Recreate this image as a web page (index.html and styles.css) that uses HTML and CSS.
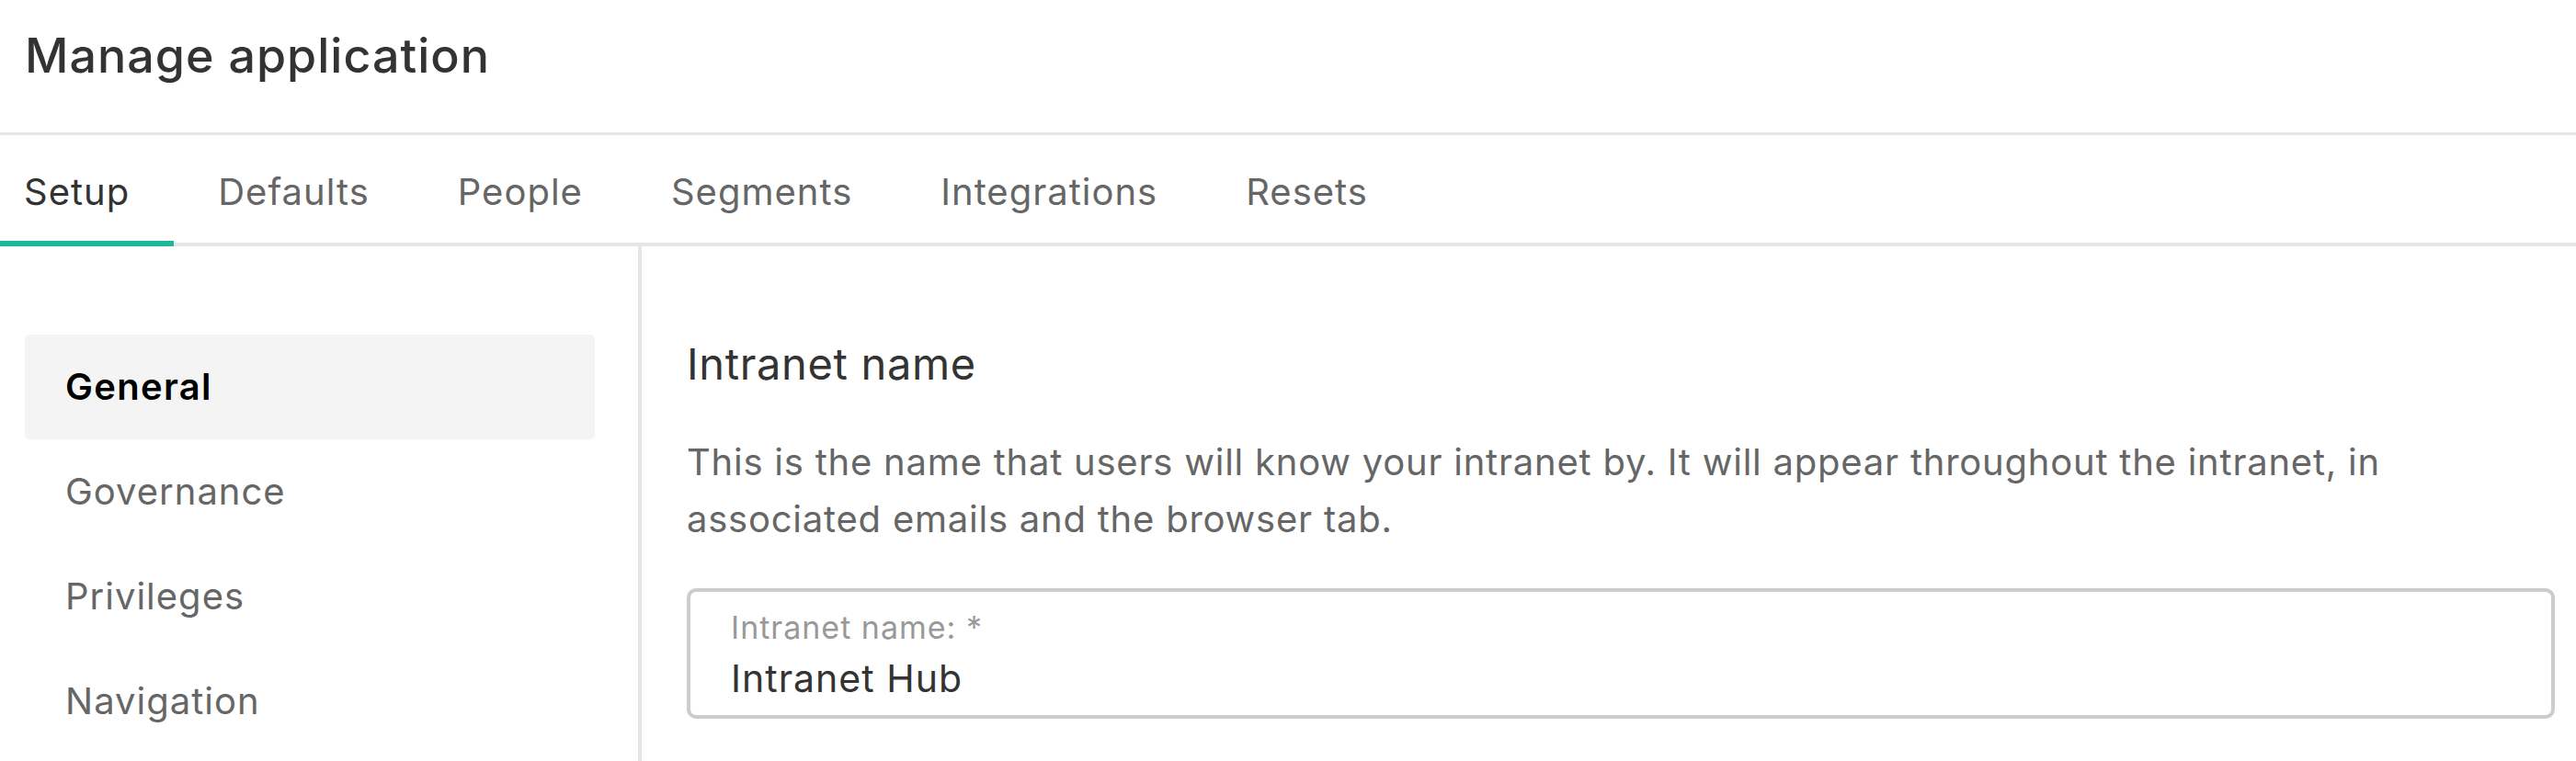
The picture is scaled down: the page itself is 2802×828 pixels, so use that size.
FILE: index.html
```html
<!DOCTYPE html>
<html lang="en">
<head>
<meta charset="utf-8">
<title>Manage application</title>
<link rel="stylesheet" href="styles.css">
</head>
<body>
  <header class="page-header">
    <h1 class="page-title">Manage application</h1>
  </header>
  <nav class="tabs">
    <a class="tab tab-active">Setup</a>
    <a class="tab">Defaults</a>
    <a class="tab">People</a>
    <a class="tab">Segments</a>
    <a class="tab">Integrations</a>
    <a class="tab">Resets</a>
  </nav>
  <div class="layout">
    <aside class="sidebar">
      <ul class="side-nav">
        <li class="side-item side-item-active">General</li>
        <li class="side-item">Governance</li>
        <li class="side-item">Privileges</li>
        <li class="side-item">Navigation</li>
      </ul>
    </aside>
    <main class="content">
      <h2 class="section-title">Intranet name</h2>
      <p class="section-desc">This is the name that users will know your intranet by. It will appear throughout the intranet, in associated emails and the browser tab.</p>
      <div class="field">
        <label class="field-label">Intranet name: *</label>
        <div class="field-value">Intranet Hub</div>
      </div>
    </main>
  </div>
</body>
</html>
```
FILE: styles.css
```css
* { box-sizing: border-box; }

html, body {
  margin: 0;
  padding: 0;
  background: #ffffff;
  font-family: "Inter", "Roboto", "Liberation Sans", sans-serif;
  overflow: hidden;
}

.page-header {
  padding: 29px 27px 51px;
  border-bottom: 3px solid #e6e6e6;
}

.page-title {
  margin: 0;
  font-size: 52px;
  line-height: 64px;
  font-weight: 500;
  letter-spacing: 1px;
  color: #333333;
}

.tabs {
  display: flex;
  box-shadow: inset 0 -4px 0 #e6e6e6;
}

.tab {
  display: block;
  padding: 38px 48px 29px;
  font-size: 40px;
  line-height: 48px;
  font-weight: 400;
  letter-spacing: 1px;
  color: #666666;
  border-bottom: 6px solid transparent;
}

.tab:first-child {
  padding-left: 26px;
}

.tab-active {
  color: #333333;
  border-bottom-color: #1bb99a;
}

.layout {
  display: flex;
  align-items: stretch;
  height: 560px;
}

.sidebar {
  flex: 0 0 698px;
  padding: 96px 47px 0 27px;
  border-right: 4px solid #e6e6e6;
}

.side-nav {
  list-style: none;
  margin: 0;
  padding: 0;
}

.side-item {
  height: 114px;
  line-height: 114px;
  padding-left: 44px;
  font-size: 40px;
  letter-spacing: 1px;
  color: #666666;
  border-radius: 5px;
}

.side-item-active {
  background: #f4f4f4;
  color: #000000;
  font-weight: 600;
  letter-spacing: 1.3px;
}

.content {
  flex: 1 1 auto;
  padding: 100px 23px 0 49px;
}

.section-title {
  margin: 0;
  font-size: 47px;
  line-height: 56px;
  font-weight: 400;
  letter-spacing: 0.65px;
  color: #333333;
}

.section-desc {
  margin: 48px 0 0;
  max-width: 1900px;
  font-size: 40px;
  line-height: 62px;
  letter-spacing: 0.77px;
  color: #666666;
}

.field {
  margin-top: 44px;
  padding: 19px 44px 16px;
  border: 4px solid #cccccc;
  border-radius: 10px;
}

.field-label {
  display: block;
  font-size: 34px;
  line-height: 40px;
  letter-spacing: 1px;
  color: #999999;
}

.field-value {
  margin-top: 11px;
  font-size: 41px;
  line-height: 48px;
  letter-spacing: 1px;
  color: #333333;
}
```
